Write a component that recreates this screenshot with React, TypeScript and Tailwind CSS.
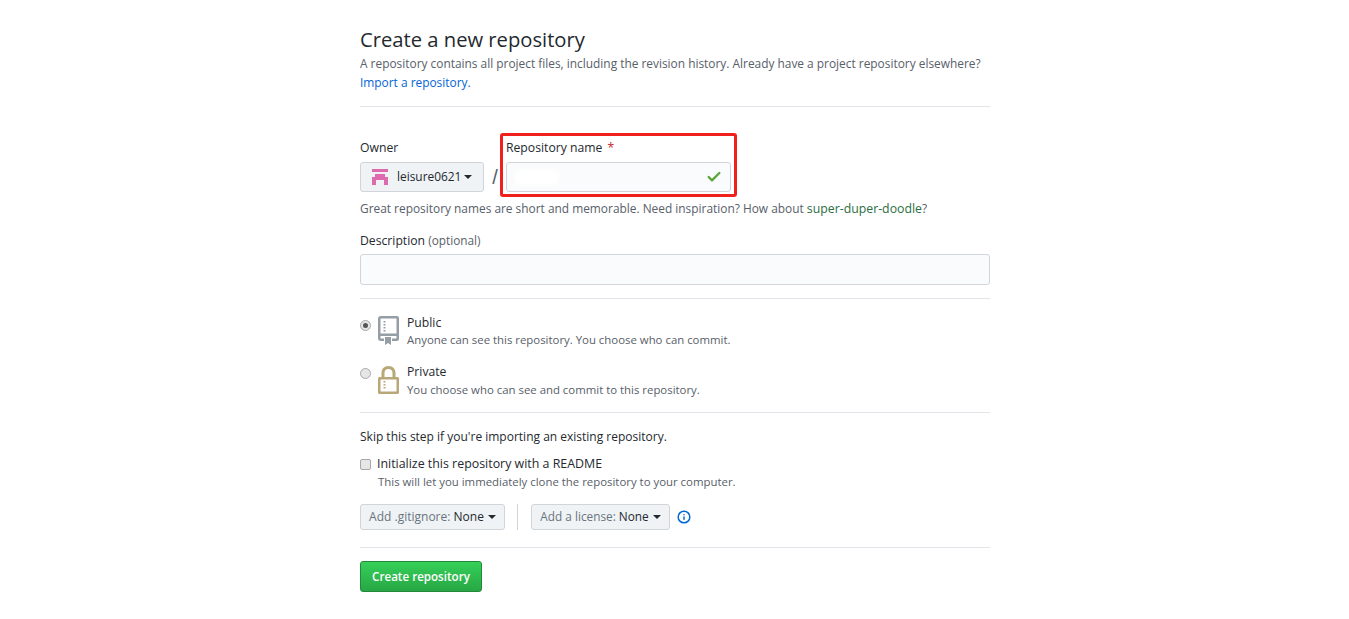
import { Check, Info } from 'lucide-react';

function Caret({ className = '' }: { className?: string }) {
  return <span className={`inline-block w-0 h-0 border-x-[4px] border-x-transparent border-t-[4px] border-t-[#24292e] ${className}`} />;
}

function Identicon() {
  return (
    <svg width="16" height="16" viewBox="0 0 16 16" className="shrink-0" fill="#dd6bad">
      <rect x="0" y="0" width="16" height="3" />
      <rect x="3" y="5" width="10" height="5" />
      <rect x="0" y="8" width="16" height="3" />
      <rect x="0" y="11" width="4" height="5" />
      <rect x="12" y="11" width="4" height="5" />
    </svg>
  );
}

function RepoIcon() {
  return (
    <svg width="21" height="29" viewBox="0 0 21 29" className="shrink-0 mt-[3px]">
      <path fill="#959da5" fillRule="evenodd" d="M3 0H19a2 2 0 0 1 2 2v21a2 2 0 0 1-2 2h-5v-2.500h4.500v-2.500H2.500v2.500H6V25H3a3 3 0 0 1-3-3V3a3 3 0 0 1 3-3ZM2.500 2.500v15h16v-15Z" />
      <path fill="#959da5" d="M7 21h6v8l-3-2-3 2ZM5.500 5h2v1.500h-2ZM5.500 8h2v1.500h-2ZM5.500 11h2v1.500h-2ZM5.500 14h2v1.500h-2Z" />
    </svg>
  );
}

function LockIcon() {
  return (
    <svg width="21" height="28" viewBox="0 0 21 28" className="shrink-0 mt-[3px]">
      <path fill="#b8a878" fillRule="evenodd" d="M10.500 0C6 0 3.500 3.200 3.500 7v4H1.500A1.500 1.500 0 0 0 0 12.500v14A1.500 1.500 0 0 0 1.500 28h18a1.500 1.500 0 0 0 1.500-1.500v-14a1.500 1.500 0 0 0-1.500-1.500H17.500V7c0-3.800-2.500-7-7-7ZM6.500 11V7c0-2.500 1.500-4 4-4s4 1.500 4 4v4ZM2.500 13.500h16v12h-16Z" />
      <path fill="#b8a878" d="M5.500 15h2v1.500h-2ZM5.500 18h2v1.500h-2ZM5.500 21h2v1.500h-2Z" />
    </svg>
  );
}

function Radio({ checked }: { checked?: boolean }) {
  return (
    <span className="w-[11px] h-[11px] rounded-full border border-[#a9a9a9] bg-[#e6e6e6] flex items-center justify-center shrink-0">
      {checked && <span className="w-[5px] h-[5px] rounded-full bg-[#555]" />}
    </span>
  );
}

export default function App() {
  return (
    <div className="min-h-[619px] bg-white text-[#24292e] text-[11.900px] font-['Open_Sans','Noto_Sans',sans-serif]">
      <div className="ml-[360px] w-[630px] pt-[25px]">
        <div className="border-b border-[#e1e4e8] pb-[14px]">
          <h1 className="text-[20.200px] leading-[29px] font-normal">Create a new repository</h1>
          <p className="text-[#586069] leading-[19px]">
            A repository contains all project files, including the revision history. Already have a project repository elsewhere?
            <br />
            <a className="text-[#0366d6]">Import a repository.</a>
          </p>
        </div>

        <div className="flex mt-[25px]">
          <div>
            <div className="leading-[32px] h-[30px] font-medium text-[12.200px]">Owner</div>
            <div className="w-[124px] h-[30px] rounded-[3px] border border-[#d1d5da] bg-[#eff3f6] flex items-center pl-[11px] gap-[9px]">
              <Identicon />
              <span className="flex items-center gap-[3px]">leisure0621 <Caret /></span>
            </div>
          </div>
          <div className="mt-[30px] w-[22px] text-center text-[20px] leading-[30px] text-[#586069] font-['Liberation_Sans',sans-serif]">/</div>
          <div className="relative">
            <div className="leading-[32px] h-[30px] font-medium text-[12.200px]">
              Repository name <span className="text-[#cb2431] ml-[2px]">*</span>
            </div>
            <div className="w-[225px] h-[30px] rounded-[3px] border border-[#d1d5da] bg-[#fafbfc] flex items-center justify-end pr-[8px]">
              <Check size={16} strokeWidth={3.500} className="text-[#5aa63c]" />
            </div>
            <div className="absolute left-[8px] top-[38px] w-[46px] h-[15px] rounded-full bg-white blur-[2px]" />
            <div className="absolute left-[-6px] top-[1px] w-[237px] h-[64px] border-[3px] border-[#f0201c] rounded-[3px]" />
          </div>
        </div>

        <p className="text-[#586069] leading-[18px] mt-[7px]">
          Great repository names are short and memorable. Need inspiration? How about <span className="text-[#2c6e3f] font-medium text-[12.300px]">super-duper-doodle</span>?
        </p>

        <div className="mt-[13px] leading-[18px] font-medium text-[12.200px]">
          Description <span className="text-[#586069] text-[11.800px] font-medium">(optional)</span>
        </div>
        <div className="mt-[4px] h-[31px] rounded-[3px] border border-[#d1d5da] bg-[#fafbfc]" />

        <div className="mt-[13px] border-t border-[#e1e4e8] pt-[14px]">
          <div className="flex items-start">
            <div className="h-[24px] flex items-center w-[18px]"><Radio checked /></div>
            <RepoIcon />
            <div className="ml-[8px]">
              <div className="leading-[19px] font-medium text-[12.200px]">Public</div>
              <div className="text-[11.400px] text-[#586069] leading-[18px] mt-[-1px]">Anyone can see this repository. You choose who can commit.</div>
            </div>
          </div>
          <div className="flex items-start mt-[14px]">
            <div className="h-[21px] flex items-center w-[18px]"><Radio /></div>
            <LockIcon />
            <div className="ml-[8px]">
              <div className="leading-[19px] font-medium mt-[-1px] text-[12.200px]">Private</div>
              <div className="text-[11.400px] text-[#586069] leading-[18px]">You choose who can see and commit to this repository.</div>
            </div>
          </div>
        </div>

        <div className="mt-[13px] border-t border-[#e1e4e8] pt-[15px]">
          <p className="leading-[18px] text-[12px]">Skip this step if you're importing an existing repository.</p>
          <div className="flex items-center mt-[9px] h-[18px]">
            <span className="w-[11px] h-[11px] rounded-[2px] border border-[#a9a9a9] bg-[#e6e6e6]" />
            <span className="ml-[6px] font-medium text-[12.400px]">Initialize this repository with a README</span>
          </div>
          <p className="ml-[18px] text-[11.400px] text-[#586069] leading-[18px]">This will let you immediately clone the repository to your computer.</p>
          <div className="flex items-center mt-[13px]">
            <div className="w-[145px] h-[26px] rounded-[3px] border border-[#d1d5da] bg-[#eff3f6] flex items-center justify-center gap-[4px] text-[12px] font-medium text-[#6a737d]">
              <span>Add .gitignore: <span className="text-[#24292e]">None</span></span> <Caret />
            </div>
            <div className="w-px h-[26px] bg-[#d1d5da] ml-[12px] mr-[13px]" />
            <div className="w-[139px] h-[26px] rounded-[3px] border border-[#d1d5da] bg-[#eff3f6] flex items-center justify-center gap-[4px] text-[11.800px] font-medium text-[#6a737d]">
              <span>Add a license: <span className="text-[#24292e]">None</span></span> <Caret />
            </div>
            <Info size={14} strokeWidth={2.500} className="ml-[7px] text-[#0366d6]" />
          </div>
        </div>

        <div className="mt-[17px] border-t border-[#e1e4e8] pt-[13px] pb-[28px]">
          <div className="w-[122px] h-[31px] rounded-[3px] border border-[#23883a] bg-gradient-to-b from-[#34d058] to-[#28a745] text-white font-semibold text-[11.600px] flex items-center justify-center">
            Create repository
          </div>
        </div>
      </div>
    </div>
  );
}
